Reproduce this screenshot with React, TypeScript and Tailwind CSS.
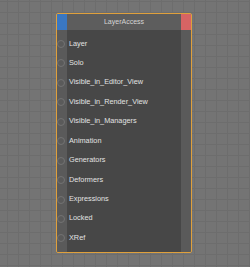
const ports = [
  "Layer",
  "Solo",
  "Visible_in_Editor_View",
  "Visible_in_Render_View",
  "Visible_in_Managers",
  "Animation",
  "Generators",
  "Deformers",
  "Expressions",
  "Locked",
  "XRef",
];

export default function App() {
  return (
    <div
      className="w-[250px] h-[267px] bg-[#747474] pl-[56px] pt-[13px] overflow-hidden"
      style={{
        backgroundImage:
          "linear-gradient(to right, #6d6d6d 1px, transparent 1px), linear-gradient(to bottom, #6d6d6d 1px, transparent 1px)",
        backgroundSize: "11px 11px",
        backgroundPosition: "7px 1px",
        fontFamily: '"Liberation Sans", Arial, sans-serif',
      }}
    >
      <div className="w-[136px] h-[240px] border border-[#dfa03c] rounded-[2px] flex flex-col overflow-hidden">
        {/* header */}
        <div className="flex h-[16px] shrink-0">
          <div className="w-[10px] bg-[#3a77c1]" />
          <div className="flex-1 bg-[#5d5d5d] flex items-center justify-center text-[7px] text-[#d4d4d4]">
            LayerAccess
          </div>
          <div className="w-[10px] bg-[#d76464]" />
        </div>
        {/* body */}
        <div className="flex flex-1">
          <div className="w-[10px] bg-[#5a5a5a] flex flex-col pt-[4.3px]">
            {ports.map((p) => (
              <div key={p} className="h-[19.45px] flex items-center">
                <div className="w-[8px] h-[8px] rounded-full border border-[#727272]" />
              </div>
            ))}
          </div>
          <div className="flex-1 bg-[#474747] flex flex-col pt-[4.3px] pl-[2px]">
            {ports.map((p) => (
              <div
                key={p}
                className="h-[19.45px] flex items-center text-[7.3px] text-[#e2e2e2] whitespace-nowrap"
              >
                {p}
              </div>
            ))}
          </div>
          <div className="w-[10px] bg-[#5a5a5a]" />
        </div>
      </div>
    </div>
  );
}
